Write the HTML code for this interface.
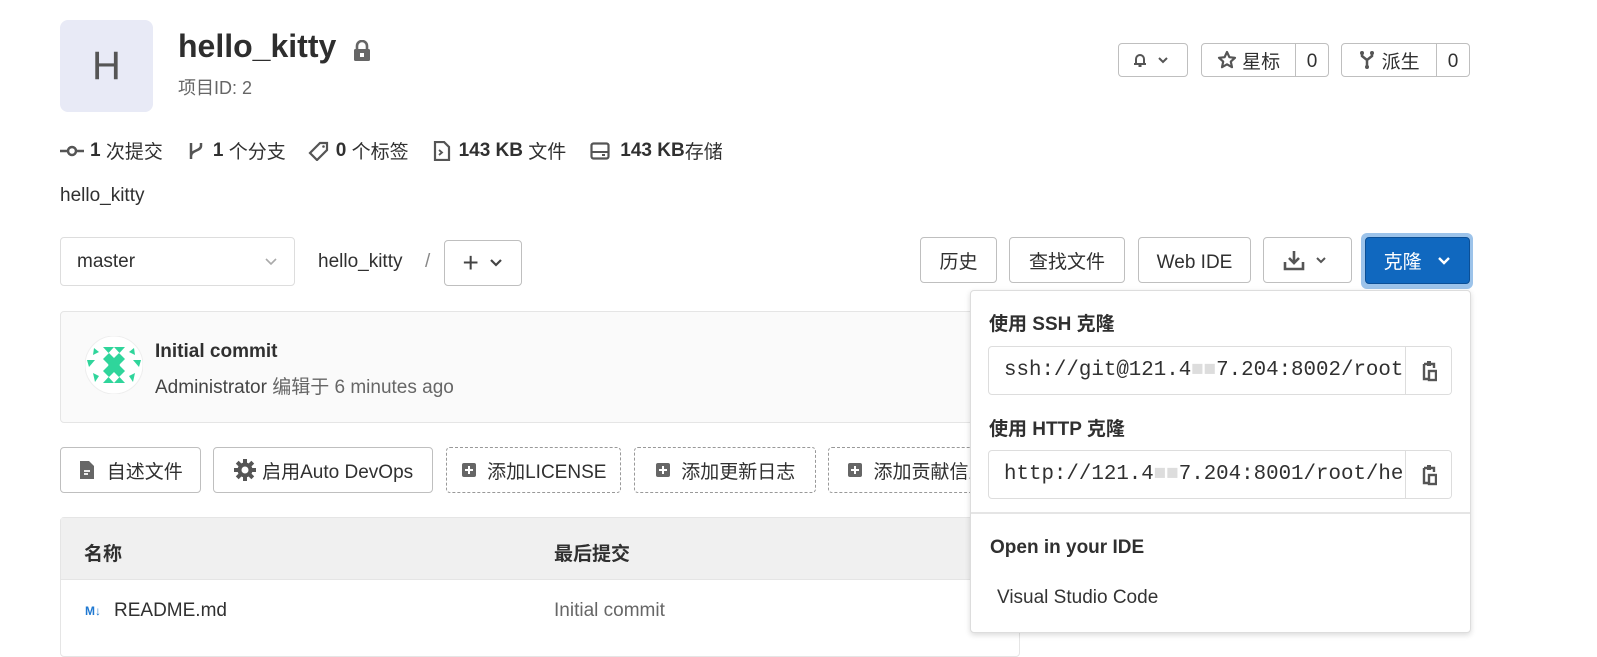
<!DOCTYPE html>
<html><head><meta charset="utf-8"><style>
*{box-sizing:border-box;margin:0;padding:0}
body{width:1597px;height:649px;overflow:hidden;background:#fff;font-family:"Liberation Sans","Noto Sans CJK SC",sans-serif;color:#303030;font-size:19px;position:relative}
.a{position:absolute}
.btn{position:absolute;border:1px solid #bfbfbf;border-radius:4px;background:#fff;display:flex;align-items:center;justify-content:center;color:#303030;font-size:19px}
.btn>span{display:flex;align-items:center;justify-content:center;height:100%}
.dash{border:1px dashed #999}
.mono{font-family:"Liberation Mono","DejaVu Sans Mono",monospace;font-size:20.8px;color:#303030}
</style></head><body>
<div class="a" style="left:60px;top:20px;width:93px;height:92px;background:#e8eaf6;border-radius:8px;display:flex;align-items:center;justify-content:center;font-size:40px;color:#555">H</div>
<div class="a" style="left:178px;top:28px;font-size:32px;font-weight:600;color:#2e2e2e">hello_kitty</div>
<svg class="a" style="left:352px;top:40px" width="20" height="22" viewBox="0 0 20 22"><rect x="2" y="9" width="16" height="12" rx="1.5" fill="#666"/><path d="M5 9V6a5 5 0 0 1 10 0v3" stroke="#666" stroke-width="2.6" fill="none"/><rect x="8" y="13" width="4" height="4" fill="#fff"/></svg>
<div class="a" style="left:178px;top:74px;font-size:18px;color:#666">项目ID: 2</div>

<div class="btn" style="left:1118px;top:43px;width:70px;height:34px"><svg width="44" height="16" viewBox="0 0 44 16"><path d="M3 12h12M5 12V7a4 4 0 0 1 8 0v5M7.5 14h3" stroke="#555" stroke-width="2" fill="none"/><path d="M28 6l4 4 4-4" stroke="#555" stroke-width="2" fill="none"/></svg></div>
<div class="btn" style="left:1201px;top:43px;width:128px;height:34px;justify-content:flex-start"><span style="width:94px;border-right:1px solid #bfbfbf"><svg width="20" height="20" viewBox="0 0 20 20"><path d="M10 2l2.4 5.2 5.6.6-4.2 3.8 1.2 5.6L10 14.3 5 17.2l1.2-5.6L2 7.8l5.6-.6z" stroke="#555" stroke-width="2.2" fill="none" stroke-linejoin="round"/></svg>&nbsp;星标</span><span style="flex:1;padding-top:4px">0</span></div>
<div class="btn" style="left:1341px;top:43px;width:129px;height:34px;justify-content:flex-start"><span style="width:95px;border-right:1px solid #bfbfbf"><svg width="18" height="20" viewBox="0 0 18 20"><circle cx="4" cy="3" r="2" fill="#555"/><circle cx="14" cy="3" r="2" fill="#555"/><circle cx="9" cy="17" r="2" fill="#555"/><path d="M4 3v3l5 4 5-4V3M9 10v7" stroke="#555" stroke-width="2.5" fill="none"/></svg>&nbsp;派生</span><span style="flex:1;padding-top:4px">0</span></div>

<div class="a" style="left:60px;top:137px;display:flex;align-items:center;gap:0;font-size:19px;white-space:nowrap">
<svg width="24" height="14" viewBox="0 0 24 14"><circle cx="12" cy="7" r="4" stroke="#555" stroke-width="2.5" fill="none"/><path d="M0 7h7M17 7h7" stroke="#555" stroke-width="2.5"/></svg>
<b style="margin-left:6px">1</b>&nbsp;次提交
<svg style="margin-left:24px" width="18" height="20" viewBox="0 0 18 20"><path d="M4 2v16M14 2v3c0 5-10 4-10 10" stroke="#555" stroke-width="2.5" fill="none"/></svg>
<b style="margin-left:8px">1</b>&nbsp;个分支
<svg style="margin-left:22px" width="22" height="20" viewBox="0 0 22 20"><path d="M12 2h7v7L9 19 2 12z" stroke="#555" stroke-width="2.2" fill="none"/><circle cx="15.5" cy="5.5" r="1.3" fill="#555"/></svg>
<b style="margin-left:6px">0</b>&nbsp;个标签
<svg style="margin-left:24px" width="18" height="20" viewBox="0 0 18 20"><path d="M2 1h9l5 5v13H2z" stroke="#555" stroke-width="2.2" fill="none"/><path d="M6 9l3 2.5-3 2.5" stroke="#555" stroke-width="1.8" fill="none"/></svg>
<b style="margin-left:8px">143 KB</b>&nbsp;文件
<svg style="margin-left:24px" width="20" height="18" viewBox="0 0 20 18"><rect x="1.5" y="1.5" width="17" height="15" rx="2" stroke="#555" stroke-width="2.2" fill="none"/><path d="M1.5 10h17M12 13h3" stroke="#555" stroke-width="2"/></svg>
<b style="margin-left:10px">143 KB</b>存储
</div>
<div class="a" style="left:60px;top:185px">hello_kitty</div>

<div class="btn" style="left:60px;top:237px;width:235px;height:49px;justify-content:space-between;padding:0 16px;border-color:#ddd">master<svg width="14" height="10"><path d="M2 2l5 5 5-5" stroke="#aaa" stroke-width="1.6" fill="none"/></svg></div>
<div class="a" style="left:318px;top:251px">hello_kitty</div>
<div class="a" style="left:425px;top:251px;color:#888">/</div>
<div class="btn" style="left:444px;top:240px;width:78px;height:46px"><span style="font-size:28px;color:#444;line-height:1">+</span>&nbsp;&nbsp;<svg width="14" height="10"><path d="M2 2l5 5 5-5" stroke="#444" stroke-width="2.2" fill="none"/></svg></div>

<div class="btn" style="left:920px;top:237px;width:77px;height:46px">历史</div>
<div class="btn" style="left:1009px;top:237px;width:116px;height:46px">查找文件</div>
<div class="btn" style="left:1138px;top:237px;width:113px;height:46px;padding-top:6px">Web IDE</div>
<div class="btn" style="left:1263px;top:237px;width:89px;height:46px"><svg width="50" height="22" viewBox="0 0 50 22"><path d="M11 2v12M6 9l5 5 5-5M2 13v7h18v-7" stroke="#555" stroke-width="2.6" fill="none"/><path d="M34 9l4 4 4-4" stroke="#555" stroke-width="2" fill="none"/></svg></div>
<div class="a" style="left:1361px;top:233px;width:112px;height:56px;border-radius:6px;background:#9cc3ea"></div>
<div class="btn" style="left:1365px;top:237px;width:105px;height:47px;background:#1068bf;border:1px solid #0b4f96;color:#fff">克隆&nbsp;&nbsp;&nbsp;<svg width="14" height="10"><path d="M2 2l5 5 5-5" stroke="#fff" stroke-width="2.4" fill="none"/></svg></div>

<div class="a" style="left:60px;top:311px;width:960px;height:112px;background:#fafafa;border:1px solid #e5e5e5;border-radius:4px"></div>
<svg class="a" style="left:85px;top:336px" width="58" height="58" viewBox="0 0 58 58"><circle cx="29" cy="29" r="29" fill="#fff" stroke="#eee"/><g fill="#2fd59b"><path d="M18 11l11 0-5.5 6zM29 11h11l-5.5 6z"/><path d="M24 17l6 6-6 6-6-6zM34 17l6 6-6 6-6-6zM29 23l6 6-6 6-6-6zM24 29l6 6-6 6-6-6zM34 29l6 6-6 6-6-6z"/><path d="M2 24h8l-6 7zM48 24h8l-2 7zM18 47h11l-5.5-6zM29 47h11l-5.5-6zM8 37l6 3-4 6zM50 37l-6 3 4 6zM9 12l5 4-6 3zM49 12l-5 4 6 3z"/></g></svg>
<div class="a" style="left:155px;top:341px;font-weight:600;font-size:19px">Initial commit</div>
<div class="a" style="left:155px;top:372px;color:#666;font-size:19px"><span style="color:#444">Administrator</span> 编辑于 6 minutes ago</div>

<div class="btn" style="left:60px;top:447px;width:141px;height:46px"><svg width="18" height="20" viewBox="0 0 18 20"><path d="M2 1h9l5 5v13H2z" fill="#666"/><path d="M6 11h6M6 14h4" stroke="#fff" stroke-width="1.8"/></svg>&nbsp;&nbsp;自述文件</div>
<div class="btn" style="left:213px;top:447px;width:220px;height:46px"><svg width="24" height="24" viewBox="0 0 24 24"><g fill="#555"><circle cx="12" cy="12" r="7.5"/><rect x="10" y="1" width="4" height="22"/><rect x="1" y="10" width="22" height="4"/><rect x="10" y="1" width="4" height="22" transform="rotate(45 12 12)"/><rect x="10" y="1" width="4" height="22" transform="rotate(-45 12 12)"/></g><circle cx="12" cy="12" r="3.5" fill="#fff"/></svg>&nbsp;启用Auto DevOps</div>
<div class="btn dash" style="left:446px;top:447px;width:175px;height:46px"><svg width="16" height="16"><rect x="1" y="1" width="14" height="14" rx="2" fill="#666"/><path d="M8 4v8M4 8h8" stroke="#fff" stroke-width="2"/></svg>&nbsp;&nbsp;添加LICENSE</div>
<div class="btn dash" style="left:634px;top:447px;width:182px;height:46px"><svg width="16" height="16"><rect x="1" y="1" width="14" height="14" rx="2" fill="#666"/><path d="M8 4v8M4 8h8" stroke="#fff" stroke-width="2"/></svg>&nbsp;&nbsp;添加更新日志</div>
<div class="btn dash" style="left:828px;top:447px;width:180px;height:46px;justify-content:flex-start;padding-left:18px"><svg width="16" height="16"><rect x="1" y="1" width="14" height="14" rx="2" fill="#666"/><path d="M8 4v8M4 8h8" stroke="#fff" stroke-width="2"/></svg>&nbsp;&nbsp;添加贡献信息</div>

<div class="a" style="left:60px;top:517px;width:960px;height:140px;border:1px solid #e5e5e5;border-radius:4px"></div>
<div class="a" style="left:61px;top:518px;width:958px;height:62px;background:#f0f0f0;border-bottom:1px solid #e5e5e5"></div>
<div class="a" style="left:84px;top:539px;font-weight:700">名称</div>
<div class="a" style="left:554px;top:539px;font-weight:700">最后提交</div>
<div class="a" style="left:85px;top:604px;color:#1f78d1;font-size:12px;font-weight:700">M↓</div>
<div class="a" style="left:114px;top:600px">README.md</div>
<div class="a" style="left:554px;top:600px;color:#666">Initial commit</div>

<div class="a" style="left:970px;top:290px;width:501px;height:343px;background:#fff;border:1px solid #ddd;border-radius:4px;box-shadow:0 2px 6px rgba(0,0,0,.15)"></div>
<div class="a" style="left:989px;top:309px;font-weight:700">使用 SSH 克隆</div>
<div class="a" style="left:988px;top:346px;width:464px;height:49px;border:1px solid #ddd;border-radius:4px;overflow:hidden"><div class="mono" style="position:absolute;left:15px;top:12px;width:400px;overflow:hidden;white-space:nowrap">ssh://git@121.4<span style="color:#ddd">■■</span>7.204:8002/root</div><div style="position:absolute;right:0;top:0;width:46px;height:47px;border-left:1px solid #ddd;background:#fff;display:flex;align-items:center;justify-content:center"><svg width="16" height="22" viewBox="0 0 16 22"><path d="M3 4h10v4M3 4v15h5" stroke="#555" stroke-width="2.4" fill="none"/><rect x="6" y="1" width="4" height="5" fill="#555"/><rect x="8" y="11" width="7" height="9" stroke="#555" stroke-width="2.4" fill="none"/></svg></div></div>
<div class="a" style="left:989px;top:414px;font-weight:700">使用 HTTP 克隆</div>
<div class="a" style="left:988px;top:450px;width:464px;height:49px;border:1px solid #ddd;border-radius:4px;overflow:hidden"><div class="mono" style="position:absolute;left:15px;top:12px;width:400px;overflow:hidden;white-space:nowrap">http://121.4<span style="color:#ddd">■■</span>7.204:8001/root/hello</div><div style="position:absolute;right:0;top:0;width:46px;height:47px;border-left:1px solid #ddd;background:#fff;display:flex;align-items:center;justify-content:center"><svg width="16" height="22" viewBox="0 0 16 22"><path d="M3 4h10v4M3 4v15h5" stroke="#555" stroke-width="2.4" fill="none"/><rect x="6" y="1" width="4" height="5" fill="#555"/><rect x="8" y="11" width="7" height="9" stroke="#555" stroke-width="2.4" fill="none"/></svg></div></div>
<div class="a" style="left:971px;top:512px;width:499px;height:2px;background:#e5e5e5"></div>
<div class="a" style="left:990px;top:537px;font-weight:600;color:#303030">Open in your IDE</div>
<div class="a" style="left:997px;top:587px;color:#333">Visual Studio Code</div>
</body></html>
